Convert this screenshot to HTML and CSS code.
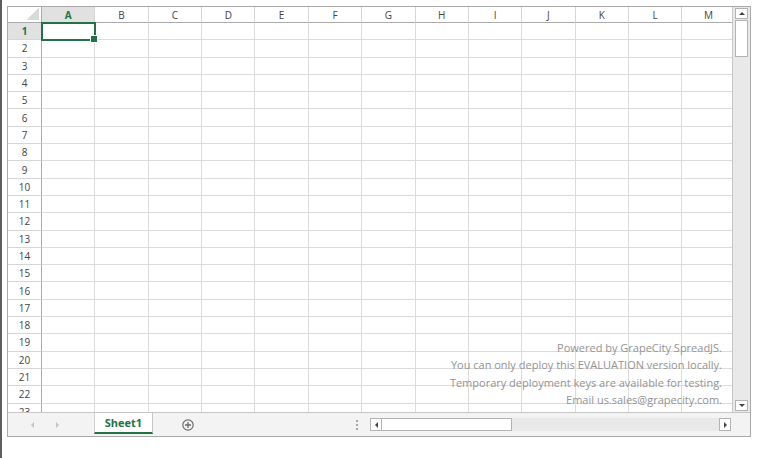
FILE: index.html
```html
<!DOCTYPE html>
<html lang="en">
<head>
<meta charset="utf-8">
<title>SpreadJS</title>
<link rel="stylesheet" href="styles.css">
</head>
<body>
<div class="page">
  <div class="spread">
    <div class="main">
      <div class="viewport">
        <div class="sheet">
          <div class="corner"></div>
          <div class="ch sel">A</div><div class="ch">B</div><div class="ch">C</div><div class="ch">D</div><div class="ch">E</div><div class="ch">F</div><div class="ch">G</div><div class="ch">H</div><div class="ch">I</div><div class="ch">J</div><div class="ch">K</div><div class="ch">L</div><div class="ch">M</div>
          <div class="rh sel">1</div><span class="active"></span><span></span><span></span><span></span><span></span><span></span><span></span><span></span><span></span><span></span><span></span><span></span><span></span>
          <div class="rh">2</div><span></span><span></span><span></span><span></span><span></span><span></span><span></span><span></span><span></span><span></span><span></span><span></span><span></span>
          <div class="rh">3</div><span></span><span></span><span></span><span></span><span></span><span></span><span></span><span></span><span></span><span></span><span></span><span></span><span></span>
          <div class="rh">4</div><span></span><span></span><span></span><span></span><span></span><span></span><span></span><span></span><span></span><span></span><span></span><span></span><span></span>
          <div class="rh">5</div><span></span><span></span><span></span><span></span><span></span><span></span><span></span><span></span><span></span><span></span><span></span><span></span><span></span>
          <div class="rh">6</div><span></span><span></span><span></span><span></span><span></span><span></span><span></span><span></span><span></span><span></span><span></span><span></span><span></span>
          <div class="rh">7</div><span></span><span></span><span></span><span></span><span></span><span></span><span></span><span></span><span></span><span></span><span></span><span></span><span></span>
          <div class="rh">8</div><span></span><span></span><span></span><span></span><span></span><span></span><span></span><span></span><span></span><span></span><span></span><span></span><span></span>
          <div class="rh">9</div><span></span><span></span><span></span><span></span><span></span><span></span><span></span><span></span><span></span><span></span><span></span><span></span><span></span>
          <div class="rh">10</div><span></span><span></span><span></span><span></span><span></span><span></span><span></span><span></span><span></span><span></span><span></span><span></span><span></span>
          <div class="rh">11</div><span></span><span></span><span></span><span></span><span></span><span></span><span></span><span></span><span></span><span></span><span></span><span></span><span></span>
          <div class="rh">12</div><span></span><span></span><span></span><span></span><span></span><span></span><span></span><span></span><span></span><span></span><span></span><span></span><span></span>
          <div class="rh">13</div><span></span><span></span><span></span><span></span><span></span><span></span><span></span><span></span><span></span><span></span><span></span><span></span><span></span>
          <div class="rh">14</div><span></span><span></span><span></span><span></span><span></span><span></span><span></span><span></span><span></span><span></span><span></span><span></span><span></span>
          <div class="rh">15</div><span></span><span></span><span></span><span></span><span></span><span></span><span></span><span></span><span></span><span></span><span></span><span></span><span></span>
          <div class="rh">16</div><span></span><span></span><span></span><span></span><span></span><span></span><span></span><span></span><span></span><span></span><span></span><span></span><span></span>
          <div class="rh">17</div><span></span><span></span><span></span><span></span><span></span><span></span><span></span><span></span><span></span><span></span><span></span><span></span><span></span>
          <div class="rh">18</div><span></span><span></span><span></span><span></span><span></span><span></span><span></span><span></span><span></span><span></span><span></span><span></span><span></span>
          <div class="rh">19</div><span></span><span></span><span></span><span></span><span></span><span></span><span></span><span></span><span></span><span></span><span></span><span></span><span></span>
          <div class="rh">20</div><span></span><span></span><span></span><span></span><span></span><span></span><span></span><span></span><span></span><span></span><span></span><span></span><span></span>
          <div class="rh">21</div><span></span><span></span><span></span><span></span><span></span><span></span><span></span><span></span><span></span><span></span><span></span><span></span><span></span>
          <div class="rh">22</div><span></span><span></span><span></span><span></span><span></span><span></span><span></span><span></span><span></span><span></span><span></span><span></span><span></span>
          <div class="rh">23</div><span></span><span></span><span></span><span></span><span></span><span></span><span></span><span></span><span></span><span></span><span></span><span></span><span></span>
        </div>
        <div class="watermark">
          <div>Powered by GrapeCity SpreadJS.</div>
          <div>You can only deploy this EVALUATION version locally.</div>
          <div>Temporary deployment keys are available for testing.</div>
          <div>Email us.sales@grapecity.com.</div>
        </div>
      </div>
      <div class="vscroll">
        <div class="sbtn vbtn up"></div>
        <div class="vthumb"></div>
        <div class="vspace"></div>
        <div class="sbtn vbtn down"></div>
      </div>
    </div>
    <div class="tabbar">
      <div class="nav"><span class="arr prev"></span><span class="arr next"></span></div>
      <div class="tab">Sheet1</div>
      <div class="add">
        <svg width="12" height="12" viewBox="0 0 12 12"><circle cx="6" cy="6" r="5.2" fill="none" stroke="#6b6b6b" stroke-width="1.2"/><path d="M6 3v6M3 6h6" stroke="#6b6b6b" stroke-width="1.3"/></svg>
      </div>
      <div class="splitter"></div>
      <div class="hscroll">
        <div class="sbtn hbtn left"></div>
        <div class="hthumb"></div>
        <div class="hspace"></div>
        <div class="sbtn hbtn right"></div>
      </div>
      <div class="corner2"></div>
    </div>
  </div>
</div>
</body>
</html>
```

FILE: styles.css
```css
* { box-sizing: border-box; }
html, body { margin: 0; padding: 0; background: #fff; }
body { font-family: "Open Sans", "Liberation Sans", sans-serif; }

.page {
  height: 458px;
  border-left: 2px solid #5e5e5e;
  padding: 6px 0 0 5px;
}

.spread {
  width: 744px;
  height: 431px;
  border: 1px solid #a9a9a9;
  display: flex;
  flex-direction: column;
  background: #fff;
}

.main { display: flex; height: 405px; }

.viewport { flex: 1; position: relative; overflow: hidden; }

.sheet {
  display: grid;
  grid-template-columns: 34px repeat(13, 53.36px);
  grid-template-rows: 16px repeat(23, 17.3px);
}
.sheet > span {
  border-right: 1px solid #dcdcdc;
  border-bottom: 1px solid #dcdcdc;
}
.corner {
  border-right: 1px solid #ababab;
  border-bottom: 1px solid #ababab;
  background: linear-gradient(135deg, transparent 50%, #d9d9d9 50%) right 2px bottom 2px / 12px 12px no-repeat;
}
.ch, .rh {
  display: flex;
  align-items: center;
  justify-content: center;
  font-size: 10px;
  color: #444;
  background: #fff;
}
.ch { border-right: 1px solid #d6d6d6; border-bottom: 1px solid #ababab; }
.rh { border-right: 1px solid #ababab; border-bottom: 1px solid #d6d6d6; }
.sel { background: #e1e1e1; color: #217346; font-weight: 700; }

.active { position: relative; outline: 2px solid #217346; outline-offset: -1px; }
.active::after {
  content: "";
  position: absolute;
  right: -4px;
  bottom: -4px;
  width: 6px;
  height: 6px;
  background: #217346;
  border: 1px solid #fff;
}

.watermark {
  position: absolute;
  right: 10px;
  bottom: 4px;
  text-align: right;
  font-size: 11px;
  line-height: 17.2px;
  color: #939393;
  white-space: nowrap;
}

.vscroll {
  width: 18px;
  background: #e9e9e9;
  border-left: 1px solid #c6c6c6;
  display: flex;
  flex-direction: column;
  align-items: center;
  padding: 1px 0;
}
.sbtn {
  background: #fff;
  border: 1px solid #b3b3b3;
  display: flex;
  align-items: center;
  justify-content: center;
}
.vbtn { width: 13px; height: 11px; }
.vthumb {
  width: 13px;
  height: 37px;
  margin-top: 1px;
  background: #fff;
  border: 1px solid #b3b3b3;
}
.vspace { flex: 1; }
.up::before, .down::before, .left::before, .right::before { content: ""; width: 0; height: 0; }
.up::before { border-left: 3px solid transparent; border-right: 3px solid transparent; border-bottom: 3px solid #444; }
.down::before { border-left: 3px solid transparent; border-right: 3px solid transparent; border-top: 3px solid #444; }
.left::before { border-top: 3px solid transparent; border-bottom: 3px solid transparent; border-right: 3px solid #444; }
.right::before { border-top: 3px solid transparent; border-bottom: 3px solid transparent; border-left: 3px solid #444; }

.tabbar {
  height: 24px;
  border-top: 1px solid #c6c6c6;
  background: #f3f3f3;
  display: flex;
  align-items: flex-start;
}
.nav { width: 86px; height: 23px; display: flex; align-items: center; }
.arr { width: 0; height: 0; border-top: 3px solid transparent; border-bottom: 3px solid transparent; }
.prev { margin-left: 23px; border-right: 3px solid #c4c4c4; }
.next { margin-left: 22px; border-left: 3px solid #c4c4c4; }

.tab {
  width: 59px;
  height: 21px;
  background: #fff;
  border-left: 1px solid #d0d0d0;
  border-right: 1px solid #c6c6c6;
  border-bottom: 2px solid #217346;
  color: #217346;
  font-weight: 700;
  font-size: 11px;
  display: flex;
  align-items: center;
  justify-content: center;
}
.add { margin-left: 29px; height: 23px; display: flex; align-items: center; }
.add svg { display: block; }
.splitter {
  margin: 7px 0 0 162px;
  width: 2px;
  height: 10px;
  background: linear-gradient(#a8a8a8 50%, transparent 50%) 0 0 / 2px 4px repeat-y;
}
.hscroll {
  flex: 1;
  margin: 5px 1px 0 12px;
  height: 13px;
  display: flex;
  background: #e9e9e9;
}
.hbtn { width: 12px; height: 13px; }
.hthumb { width: 130px; height: 13px; background: #fff; border: 1px solid #b3b3b3; border-left: 0; }
.hspace { flex: 1; }
.corner2 { width: 18px; height: 23px; }
```
